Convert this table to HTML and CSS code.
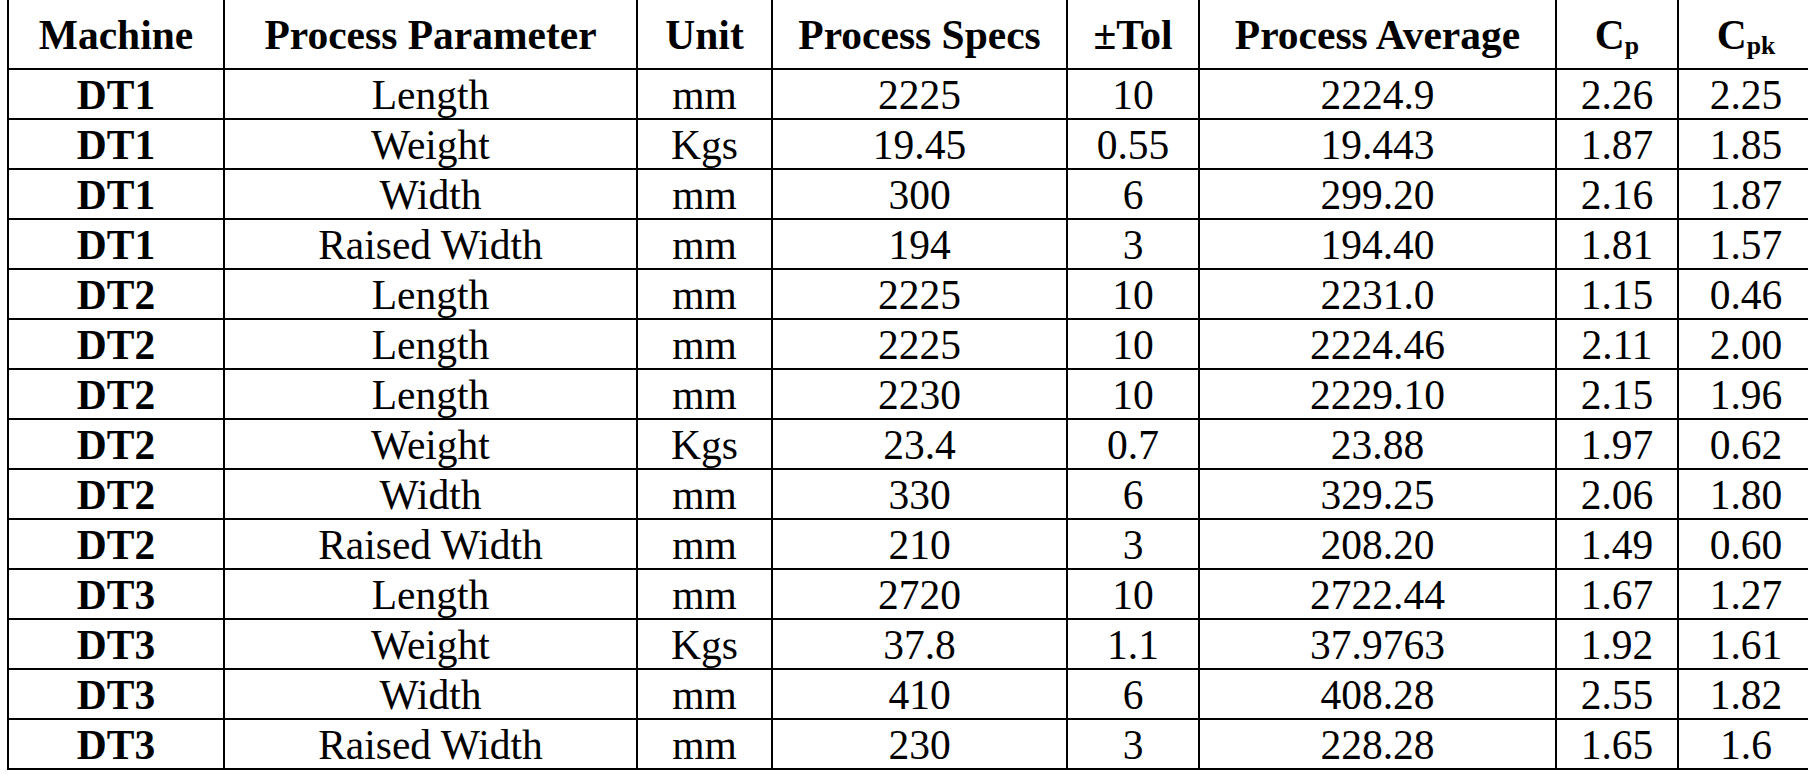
FILE: index.html
```html
<!DOCTYPE html>
<html>
<head>
<meta charset="utf-8">
<link rel="stylesheet" href="styles.css">
</head>
<body>
<table class="cap">
  <colgroup>
    <col class="c-machine">
    <col class="c-param">
    <col class="c-unit">
    <col class="c-spec">
    <col class="c-tol">
    <col class="c-avg">
    <col class="c-cp">
    <col class="c-cpk">
  </colgroup>
  <thead>
    <tr class="head">
      <th>Machine</th>
      <th>Process Parameter</th>
      <th>Unit</th>
      <th>Process Specs</th>
      <th>±Tol</th>
      <th>Process Average</th>
      <th>C<sub>p</sub></th>
      <th>C<sub>pk</sub></th>
    </tr>
  </thead>
  <tbody>
    <tr><td class="m">DT1</td><td>Length</td><td>mm</td><td>2225</td><td>10</td><td>2224.9</td><td>2.26</td><td>2.25</td></tr>
    <tr><td class="m">DT1</td><td>Weight</td><td>Kgs</td><td>19.45</td><td>0.55</td><td>19.443</td><td>1.87</td><td>1.85</td></tr>
    <tr><td class="m">DT1</td><td>Width</td><td>mm</td><td>300</td><td>6</td><td>299.20</td><td>2.16</td><td>1.87</td></tr>
    <tr><td class="m">DT1</td><td>Raised Width</td><td>mm</td><td>194</td><td>3</td><td>194.40</td><td>1.81</td><td>1.57</td></tr>
    <tr><td class="m">DT2</td><td>Length</td><td>mm</td><td>2225</td><td>10</td><td>2231.0</td><td>1.15</td><td>0.46</td></tr>
    <tr><td class="m">DT2</td><td>Length</td><td>mm</td><td>2225</td><td>10</td><td>2224.46</td><td>2.11</td><td>2.00</td></tr>
    <tr><td class="m">DT2</td><td>Length</td><td>mm</td><td>2230</td><td>10</td><td>2229.10</td><td>2.15</td><td>1.96</td></tr>
    <tr><td class="m">DT2</td><td>Weight</td><td>Kgs</td><td>23.4</td><td>0.7</td><td>23.88</td><td>1.97</td><td>0.62</td></tr>
    <tr><td class="m">DT2</td><td>Width</td><td>mm</td><td>330</td><td>6</td><td>329.25</td><td>2.06</td><td>1.80</td></tr>
    <tr><td class="m">DT2</td><td>Raised Width</td><td>mm</td><td>210</td><td>3</td><td>208.20</td><td>1.49</td><td>0.60</td></tr>
    <tr><td class="m">DT3</td><td>Length</td><td>mm</td><td>2720</td><td>10</td><td>2722.44</td><td>1.67</td><td>1.27</td></tr>
    <tr><td class="m">DT3</td><td>Weight</td><td>Kgs</td><td>37.8</td><td>1.1</td><td>37.9763</td><td>1.92</td><td>1.61</td></tr>
    <tr><td class="m">DT3</td><td>Width</td><td>mm</td><td>410</td><td>6</td><td>408.28</td><td>2.55</td><td>1.82</td></tr>
    <tr><td class="m">DT3</td><td>Raised Width</td><td>mm</td><td>230</td><td>3</td><td>228.28</td><td>1.65</td><td>1.6</td></tr>
  </tbody>
</table>
</body>
</html>
```
FILE: styles.css
```css
html, body {
  margin: 0;
  padding: 0;
  background: #fff;
  overflow: hidden;
}
body {
  padding-left: 7px;
  width: 1900px;
}
.cap {
  border-collapse: collapse;
  table-layout: fixed;
  border-top: hidden;
  font-family: "Liberation Serif", "Times New Roman", serif;
  font-size: 41.5px;
  color: #000;
  width: 1806px;
}
.c-machine { width: 216px; }
.c-param { width: 413px; }
.c-unit { width: 135px; }
.c-spec { width: 295px; }
.c-tol { width: 132px; }
.c-avg { width: 357px; }
.c-cp { width: 122px; }
.c-cpk { width: 136px; }
.cap th, .cap td {
  border: 2px solid #000;
  text-align: center;
  vertical-align: middle;
  padding: 3px 0 0;
  white-space: nowrap;
  line-height: 1;
}
.cap th {
  font-weight: bold;
}
.head {
  height: 69px;
}
.cap tbody tr {
  height: 50px;
}
.m {
  font-weight: bold;
}
.cap sub {
  font-size: 0.62em;
  vertical-align: -0.2em;
  line-height: 0;
}
```
